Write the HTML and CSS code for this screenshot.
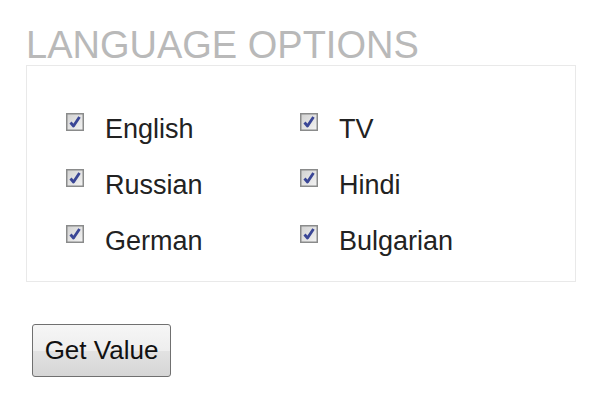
FILE: index.html
```html
<!DOCTYPE html>
<html lang="en">
<head>
  <meta charset="UTF-8">
  <title>Language Options</title>
  <link rel="stylesheet" href="styles.css">
</head>
<body>

<h1 class="title">LANGUAGE OPTIONS</h1>

<!-- Options box -->
<div class="options">
  <label class="option"><svg class="check" viewBox="0 0 18 18"><rect x="0" y="0" width="18" height="18" fill="#8a8b8b"/><rect x="1.5" y="1.5" width="15" height="15" fill="url(#g)"/><path d="M4.5 9.5 L7.5 13 L13.5 4" fill="none" stroke="#3a4696" stroke-width="2.8" stroke-linejoin="round"/><defs><linearGradient id="g" x1="0" y1="0" x2="1" y2="1"><stop offset="0" stop-color="#d2d2d2"/><stop offset="1" stop-color="#f2f2f2"/></linearGradient></defs></svg>English</label>
  <label class="option"><svg class="check" viewBox="0 0 18 18"><rect x="0" y="0" width="18" height="18" fill="#8a8b8b"/><rect x="1.5" y="1.5" width="15" height="15" fill="url(#g)"/><path d="M4.5 9.5 L7.5 13 L13.5 4" fill="none" stroke="#3a4696" stroke-width="2.8" stroke-linejoin="round"/></svg>TV</label>
  <label class="option"><svg class="check" viewBox="0 0 18 18"><rect x="0" y="0" width="18" height="18" fill="#8a8b8b"/><rect x="1.5" y="1.5" width="15" height="15" fill="url(#g)"/><path d="M4.5 9.5 L7.5 13 L13.5 4" fill="none" stroke="#3a4696" stroke-width="2.8" stroke-linejoin="round"/></svg>Russian</label>
  <label class="option"><svg class="check" viewBox="0 0 18 18"><rect x="0" y="0" width="18" height="18" fill="#8a8b8b"/><rect x="1.5" y="1.5" width="15" height="15" fill="url(#g)"/><path d="M4.5 9.5 L7.5 13 L13.5 4" fill="none" stroke="#3a4696" stroke-width="2.8" stroke-linejoin="round"/></svg>Hindi</label>
  <label class="option"><svg class="check" viewBox="0 0 18 18"><rect x="0" y="0" width="18" height="18" fill="#8a8b8b"/><rect x="1.5" y="1.5" width="15" height="15" fill="url(#g)"/><path d="M4.5 9.5 L7.5 13 L13.5 4" fill="none" stroke="#3a4696" stroke-width="2.8" stroke-linejoin="round"/></svg>German</label>
  <label class="option"><svg class="check" viewBox="0 0 18 18"><rect x="0" y="0" width="18" height="18" fill="#8a8b8b"/><rect x="1.5" y="1.5" width="15" height="15" fill="url(#g)"/><path d="M4.5 9.5 L7.5 13 L13.5 4" fill="none" stroke="#3a4696" stroke-width="2.8" stroke-linejoin="round"/></svg>Bulgarian</label>
</div>

<button class="get-value">Get Value</button>

</body>
</html>
```

FILE: styles.css
```css
body { font-family: "Liberation Sans", Arial, sans-serif; margin: 0; padding: 0; background: #fff; }
.title { margin: 26px 0 0 26px; font-size: 38px; line-height: 38px; font-weight: normal; color: #b9b9b9; height: 39px; }
.options { margin-left: 26px; width: 550px; border: 1px solid #e9e9e9; padding: 35px 0 12px 39px; box-sizing: border-box; display: grid; grid-template-columns: 234px auto; }
.option { display: flex; align-items: center; gap: 21px; height: 56px; font-size: 27px; line-height: 56px; color: #222; }
.check { width: 18px; height: 18px; flex: none; margin-bottom: 14px; }
.get-value { display: block; margin: 42px 0 0 32px; width: 139px; height: 53px; font-family: inherit; font-size: 26px; color: #111; border: 1px solid #707070; border-radius: 3px; background: linear-gradient(#f6f6f6, #eeeeee 50%, #e2e2e2 51%, #d6d6d6); padding: 0; }
```
